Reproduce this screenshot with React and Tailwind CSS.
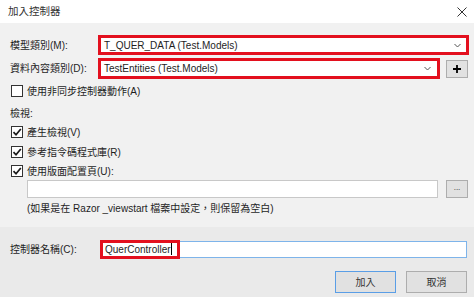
import React from "react";

const font = "font-['Liberation_Sans','Noto_Sans_CJK_TC',sans-serif]";

function Check({ checked }) {
  return (
    <div className="w-[12px] h-[12px] border border-[#333333] bg-white flex items-center justify-center shrink-0">
      {checked && (
        <svg width="10" height="10" viewBox="0 0 10 10">
          <path d="M1.5 5.2 L4 7.8 L8.8 2" fill="none" stroke="#1a1a1a" strokeWidth="1.7" />
        </svg>
      )}
    </div>
  );
}

function Chevron() {
  return (
    <svg width="7" height="5" viewBox="0 0 7 5">
      <path d="M0.5 1 L3.5 4 L6.5 1" fill="none" stroke="#555" strokeWidth="1" />
    </svg>
  );
}

export default function App() {
  return (
    <div className={`w-[474px] h-[297px] overflow-hidden flex flex-col text-[10px] text-[#1e1e1e] ${font}`}>
      <div className="h-[23px] bg-white flex items-center justify-between pl-[8px] pr-[6px] shrink-0">
        <span className="text-[10.5px] text-[#333]">加入控制器</span>
        <svg width="10" height="10" viewBox="0 0 10 10" className="mr-[1px]">
          <path d="M0.5 0.5 L9.5 9.5 M9.5 0.5 L0.5 9.5" stroke="#333" strokeWidth="1" />
        </svg>
      </div>

      <div className="h-[204px] bg-[#f1f1f1] flex flex-col pl-[10px] pr-[5px] shrink-0">
        <div className="mt-[12px] h-[20px] flex items-center">
          <span className="w-[88px]">模型類別(M):</span>
          <div className="flex-1 h-[20px] border-[3px] border-[#e3101e] bg-white flex items-center justify-between pl-[3px] pr-[5px]">
            <span>T_QUER_DATA (Test.Models)</span>
            <Chevron />
          </div>
        </div>

        <div className="mt-[3px] h-[21px] flex items-center">
          <span className="w-[88px]">資料內容類別(D):</span>
          <div className="w-[342px] h-[21px] border-[3px] border-[#e3101e] bg-white flex items-center justify-between pl-[3px] pr-[6px]">
            <span>TestEntities (Test.Models)</span>
            <Chevron />
          </div>
          <div className="ml-[6px] w-[22px] h-[18px] bg-[#e1e1e1] border border-[#adadad] flex items-center justify-center">
            <svg width="10" height="10" viewBox="0 0 10 10">
              <path d="M5 1 V9 M1 5 H9" stroke="#000" strokeWidth="1.8" />
            </svg>
          </div>
        </div>

        <div className="mt-[5px] h-[14px] flex items-center pl-[1px] gap-[4px]">
          <Check />
          <span>使用非同步控制器動作(A)</span>
        </div>

        <div className="mt-[8px] h-[14px] flex items-center">
          <span>檢視:</span>
        </div>

        <div className="mt-[5px] h-[14px] flex items-center pl-[1px] gap-[4px]">
          <Check checked />
          <span>產生檢視(V)</span>
        </div>
        <div className="mt-[6px] h-[14px] flex items-center pl-[1px] gap-[4px]">
          <Check checked />
          <span>參考指令碼程式庫(R)</span>
        </div>
        <div className="mt-[5px] h-[14px] flex items-center pl-[1px] gap-[4px]">
          <Check checked />
          <span>使用版面配置頁(U):</span>
        </div>

        <div className="mt-[2px] h-[18px] flex items-center pl-[17px]">
          <div className="w-[411px] h-[18px] bg-white border border-[#c8c8c8]" />
          <div className="ml-[8px] w-[22px] h-[18px] bg-[#e1e1e1] border border-[#adadad] flex items-center justify-center text-[8px] leading-none pb-[3px]">
            ...
          </div>
        </div>

        <div className="mt-[3px] h-[15px] flex items-center pl-[17px]">
          <span>(如果是在 Razor _viewstart 檔案中設定，則保留為空白)</span>
        </div>
      </div>

      <div className="flex-1 bg-[#eaeaea] flex flex-col pl-[10px] pr-[7px]">
        <div className="mt-[13px] h-[18px] flex items-center">
          <span className="w-[90px]">控制器名稱(C):</span>
          <div className="relative flex-1 h-[17px] bg-white border border-[#7eb4ea] flex items-center pl-[4px]">
            <span>QuerController</span>
            <span className="w-[1px] h-[12px] bg-black" />
            <div className="absolute left-[-1px] top-[-2px] w-[80px] h-[19px] border-[3px] border-[#e3101e]" />
          </div>
        </div>

        <div className="mt-[13px] flex justify-end gap-[10px]">
          <div className="w-[61px] h-[22px] bg-[#e1e1e1] border border-[#5a9ee6] flex items-center justify-center text-[#333]">
            加入
          </div>
          <div className="w-[61px] h-[22px] bg-[#e1e1e1] border border-[#adadad] flex items-center justify-center text-[#333]">
            取消
          </div>
        </div>
      </div>
    </div>
  );
}
